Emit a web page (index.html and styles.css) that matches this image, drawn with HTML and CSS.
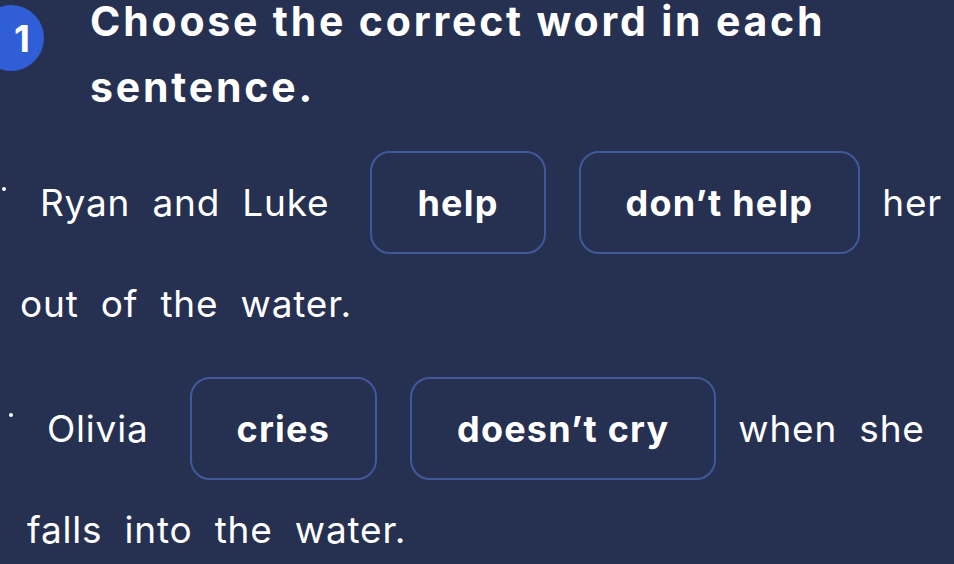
FILE: index.html
```html
<!DOCTYPE html>
<html lang="en">
<head>
<meta charset="utf-8">
<title>Choose the correct word</title>
<link rel="stylesheet" href="styles.css">
</head>
<body>
<main class="exercise">
  <header class="exercise-head">
    <span class="badge">1</span>
    <h1 class="title">Choose the correct word in each sentence.</h1>
  </header>
  <ul class="sentences">
    <li class="sentence">
      <div class="line line-choices">
        <span class="dot"></span>
        <span class="text">Ryan and Luke</span>
        <span class="choice choice-first">help</span>
        <span class="choice choice-second">don’t help</span>
        <span class="text text-after">her</span>
      </div>
      <div class="line line-rest">
        <span class="text">out of the water.</span>
      </div>
    </li>
    <li class="sentence sentence-shift">
      <div class="line line-choices">
        <span class="dot"></span>
        <span class="text">Olivia</span>
        <span class="choice choice-first">cries</span>
        <span class="choice choice-second">doesn’t cry</span>
        <span class="text text-after">when she</span>
      </div>
      <div class="line line-rest">
        <span class="text">falls into the water.</span>
      </div>
    </li>
  </ul>
</main>
</body>
</html>
```

FILE: styles.css
```css
html, body {
  margin: 0;
  padding: 0;
  background: #263050;
  height: 100%;
  overflow: hidden;
}
body {
  font-family: Inter, "Liberation Sans", sans-serif;
  color: #ffffff;
}
.exercise {
  display: flex;
  flex-direction: column;
}
.exercise-head {
  display: flex;
  align-items: flex-start;
}
.badge {
  flex: none;
  width: 66px;
  height: 66px;
  margin-left: -22px;
  margin-top: 5px;
  padding-left: 22px;
  box-sizing: border-box;
  border-radius: 50%;
  background: #2f5ed6;
  color: #ffffff;
  font-weight: 700;
  font-size: 37px;
  display: flex;
  align-items: center;
  justify-content: center;
}
.title {
  flex: 1;
  min-width: 0;
  margin: -12px 0 0 46px;
  font-size: 41px;
  font-weight: 700;
  line-height: 66px;
  letter-spacing: 2.8px;
}
.sentences {
  list-style: none;
  margin: 31px 0 0 0;
  padding: 0;
}
.sentence {
  padding-left: 20px;
}
.sentence + .sentence {
  margin-top: 51px;
}
.sentence-shift {
  padding-left: 27px;
}
.line {
  display: flex;
  align-items: center;
}
.line-choices {
  height: 103px;
}
.line-rest {
  margin-top: 28px;
}
.dot {
  flex: none;
  align-self: flex-start;
  width: 4px;
  height: 4px;
  border-radius: 50%;
  background: #ffffff;
  margin-top: 36px;
  margin-left: -18px;
  margin-right: 34px;
}
.text {
  font-size: 37px;
  line-height: 44px;
  font-weight: 400;
  letter-spacing: 0.8px;
  word-spacing: 11px;
  white-space: nowrap;
}
.choice {
  flex: none;
  box-sizing: border-box;
  height: 103px;
  padding: 0 45px;
  border: 2px solid #41599a;
  border-radius: 20px;
  display: flex;
  align-items: center;
  justify-content: center;
  font-family: Inter, "Liberation Sans", sans-serif;
  font-weight: 700;
  font-size: 36px;
  letter-spacing: 1.2px;
  white-space: nowrap;
}
.choice-first {
  margin-left: 41px;
}
.choice-second {
  margin-left: 33px;
}
.text-after {
  margin-left: 22px;
}
```
